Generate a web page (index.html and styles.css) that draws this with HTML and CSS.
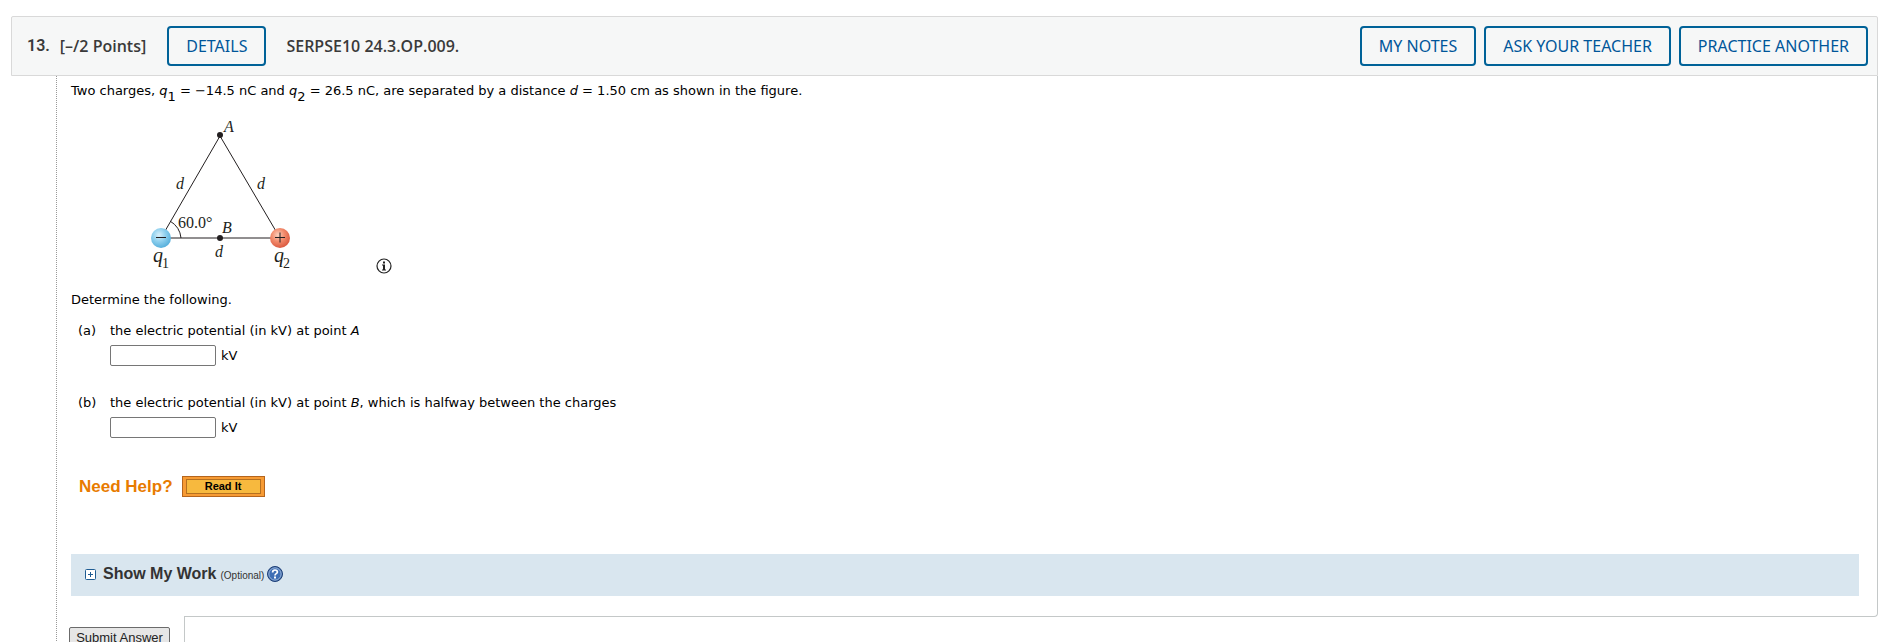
FILE: index.html
```
<!DOCTYPE html>
<html lang="en">
<head>
  <meta charset="UTF-8" />
  <meta name="viewport" content="width=device-width, initial-scale=1.0"/>
  <title>SERPSE10 24.3.OP.009.</title>
  <link rel="stylesheet" href="styles.css">
</head>
<body>

  <div class="question-header">
    <span class="number">13.</span>
    <span class="points">[–/2 Points]</span>
    <button type="button" class="header-btn details-btn">DETAILS</button>
    <span class="code">SERPSE10 24.3.OP.009.</span>
    <div class="header-actions">
      <button type="button" class="header-btn">MY NOTES</button>
      <button type="button" class="header-btn">ASK YOUR TEACHER</button>
      <button type="button" class="header-btn">PRACTICE ANOTHER</button>
    </div>
  </div>

  <form id="question-form">
    <div class="question-body">
      <p class="intro">Two charges, <i>q</i><sub>1</sub> = −14.5 nC and <i>q</i><sub>2</sub> = 26.5 nC, are separated by a distance <i>d</i> = 1.50 cm as shown in the figure.</p>

      <div class="figure">
        <svg class="triangle" width="290" height="168" viewBox="0 0 290 168">
          <defs>
            <radialGradient id="blue" cx="0.4" cy="0.35" r="0.65">
              <stop offset="0" stop-color="#d8f0fa"/>
              <stop offset="0.5" stop-color="#8fd0ee"/>
              <stop offset="1" stop-color="#58b0dc"/>
            </radialGradient>
            <radialGradient id="red" cx="0.4" cy="0.35" r="0.65">
              <stop offset="0" stop-color="#fbd0bd"/>
              <stop offset="0.5" stop-color="#f28b6c"/>
              <stop offset="1" stop-color="#dc5c42"/>
            </radialGradient>
          </defs>
          <path d="M90 128 L149 26 L209 128 Z" class="line"/>
          <path d="M99 111 Q109 117 110 128" class="line"/>
          <circle cx="149" cy="25" r="3" fill="#231f20"/>
          <circle cx="149" cy="128" r="3" fill="#231f20"/>
          <circle cx="90" cy="128" r="10" fill="url(#blue)"/>
          <circle cx="209" cy="128" r="10" fill="url(#red)"/>
          <path d="M85 127.500h10M204 127.500h10M209 122.500v10" class="line"/>
          <text x="153" y="22" class="label">A</text>
          <text x="105" y="79" class="label">d</text>
          <text x="186" y="79" class="label">d</text>
          <text x="151" y="123" class="label">B</text>
          <text x="144" y="147" class="label">d</text>
          <text x="107" y="118" class="angle">60.0°</text>
          <text x="82" y="152" class="charge">q</text>
          <text x="91" y="158" class="charge-sub">1</text>
          <text x="203" y="152" class="charge">q</text>
          <text x="212" y="158" class="charge-sub">2</text>
        </svg>
        <svg class="info" width="16" height="16" viewBox="0 0 16 16">
          <circle cx="8" cy="8" r="7" fill="none" stroke="#222" stroke-width="1.200"/>
          <path d="M7 3.500h2v2h-2zM6 6.500h3v5h1v1h-4v-1h1v-4h-1z" fill="#222"/>
        </svg>
      </div>

      <p class="task">Determine the following.</p>

      <div class="part">
        <span class="letter">(a)</span>
        <div>
          <label for="answer-a">the electric potential (in kV) at point <i>A</i></label>
          <div class="answer"><input type="text" id="answer-a" /> kV</div>
        </div>
      </div>
      <div class="part">
        <span class="letter">(b)</span>
        <div>
          <label for="answer-b">the electric potential (in kV) at point <i>B</i>, which is halfway between the charges</label>
          <div class="answer"><input type="text" id="answer-b" /> kV</div>
        </div>
      </div>

      <div class="help">
        <span class="help-title">Need Help?</span>
        <button type="button" class="read-btn"><span>Read It</span></button>
      </div>

      <div class="work">
        <svg width="11" height="11" viewBox="0 0 11 11">
          <rect x="0.500" y="0.500" width="10" height="10" rx="1" fill="#fff" stroke="#1f5c93"/>
          <path d="M3 5.500h5M5.500 3v5" stroke="#1f5c93"/>
        </svg>
        <span class="work-title">Show My Work</span>
        <span class="optional">(Optional)</span>
        <svg width="16" height="16" viewBox="0 0 16 16">
          <circle cx="8" cy="8" r="7.500" fill="#2b5797" stroke="#1d3f78"/>
          <circle cx="8" cy="8" r="6.200" fill="#3f6fb5" stroke="#b8cde8" stroke-width="0.800"/>
          <path d="M5.600 6.400C5.600 3.200 10.400 3.300 10.400 6C10.400 7.700 8 7.600 8 9.400" fill="none" stroke="#fff" stroke-width="1.700"/>
          <rect x="7" y="10.500" width="2" height="2" fill="#fff"/>
        </svg>
      </div>
    </div>

    <div class="submit-tab">
      <button type="submit" class="submit-btn">Submit Answer</button>
    </div>
  </form>

</body>
</html>
```
FILE: styles.css
```
body {
  margin: 0;
  padding: 16px 14px 0 11px;
  height: 100vh;
  box-sizing: border-box;
  overflow: hidden;
  background: #fff;
  color: #000;
  font-family: Verdana, "DejaVu Sans", sans-serif;
  font-size: 13px;
  line-height: 16px;
}

/* Header bar */
.question-header {
  display: flex;
  align-items: center;
  height: 60px;
  box-sizing: border-box;
  padding: 0 9px 0 15px;
  border: 1px solid #d9d9d9;
  border-radius: 2px 2px 0 0;
  background: #f6f7f7;
  color: #3a3a3a;
  font-family: "Open Sans", sans-serif;
  font-size: 16px;
  font-weight: 600;
}

.number {
  font-family: Roboto, sans-serif;
  margin-right: 10px;
}

.header-btn {
  height: 40px;
  padding: 0 17px;
  border: 2px solid #006298;
  border-radius: 4px;
  background: transparent;
  color: #00569a;
  font-family: "Noto Sans", "Open Sans", sans-serif;
  font-size: 16px;
}

.details-btn {
  margin: 0 20px 0 21px;
}

.header-actions {
  display: flex;
  gap: 8px;
  margin-left: auto;
}

/* Question */
.question-body {
  margin-left: 45px;
  padding: 7px 18px 20px 14px;
  border: 1px solid #c4c8c8;
  border-left-style: dotted;
  border-left-color: #999;
  border-top: none;
  border-bottom-right-radius: 4px;
}

.intro,
.task {
  margin: 0;
}

.intro {
  height: 27px;
}

sub {
  font-size: 13px;
  line-height: 0;
  vertical-align: -6px;
}

.figure {
  display: flex;
  align-items: flex-end;
  gap: 15px;
}

.triangle {
  display: block;
  font-family: "Liberation Serif", serif;
  fill: #231f20;
}

.info {
  margin-bottom: 4px;
}

.line {
  fill: none;
  stroke: #231f20;
}

.label {
  font-size: 16px;
  font-style: italic;
}

.angle {
  font-size: 16px;
}

.charge {
  font-size: 20px;
  font-style: italic;
}

.charge-sub {
  font-size: 14px;
}

.task {
  padding: 14px 0 15px;
}

.part {
  display: flex;
  padding-left: 7px;
  margin-bottom: 29px;
}

.letter {
  width: 32px;
}

.answer {
  display: flex;
  align-items: center;
  gap: 5px;
  margin-top: 6px;
}

.answer input {
  width: 106px;
  height: 21px;
  box-sizing: border-box;
  border: 1px solid #767676;
  border-radius: 2px;
}

.help {
  display: flex;
  align-items: center;
  gap: 9px;
  padding: 9px 0 57px 8px;
}

.help-title {
  color: #e87b00;
  font-family: Arial, "Liberation Sans", sans-serif;
  font-size: 17px;
  font-weight: bold;
}

.read-btn {
  width: 83px;
  height: 21px;
  padding: 2px 3px;
  border: 1px solid #b5651d;
  background: #f79b34;
}

.read-btn span {
  display: block;
  border: 1px solid #b5701f;
  background: #f7b93e;
  color: #000;
  font: bold 11px/13px Arial, "Liberation Sans", sans-serif;
}

.work {
  display: flex;
  align-items: center;
  height: 40px;
  padding: 0 0 2px 14px;
  background: #d9e6ef;
  color: #333;
  font-family: Arial, "Liberation Sans", sans-serif;
}

.work-title {
  margin: 0 4px 0 7px;
  font-size: 16px;
  font-weight: bold;
}

.optional {
  margin: 4px 3px 0 0;
  font-size: 10px;
}

/* Tab that hangs off the bottom of the question */
.submit-tab {
  position: relative;
  width: 127px;
  margin: -1px 0 0 45px;
  padding: 11px 0;
  border-left: 1px dotted #999;
  border-right: 1px solid #c4c8c8;
  background: #fff;
}

.submit-btn {
  width: 101px;
  height: 21px;
  margin-left: 12px;
  padding: 0;
  border: 1px solid #6b6b6b;
  border-radius: 2px;
  background: #e6e6e6;
  color: #222;
  font-family: Arial, "Liberation Sans", sans-serif;
  font-size: 13px;
  line-height: 15px;
}
```
